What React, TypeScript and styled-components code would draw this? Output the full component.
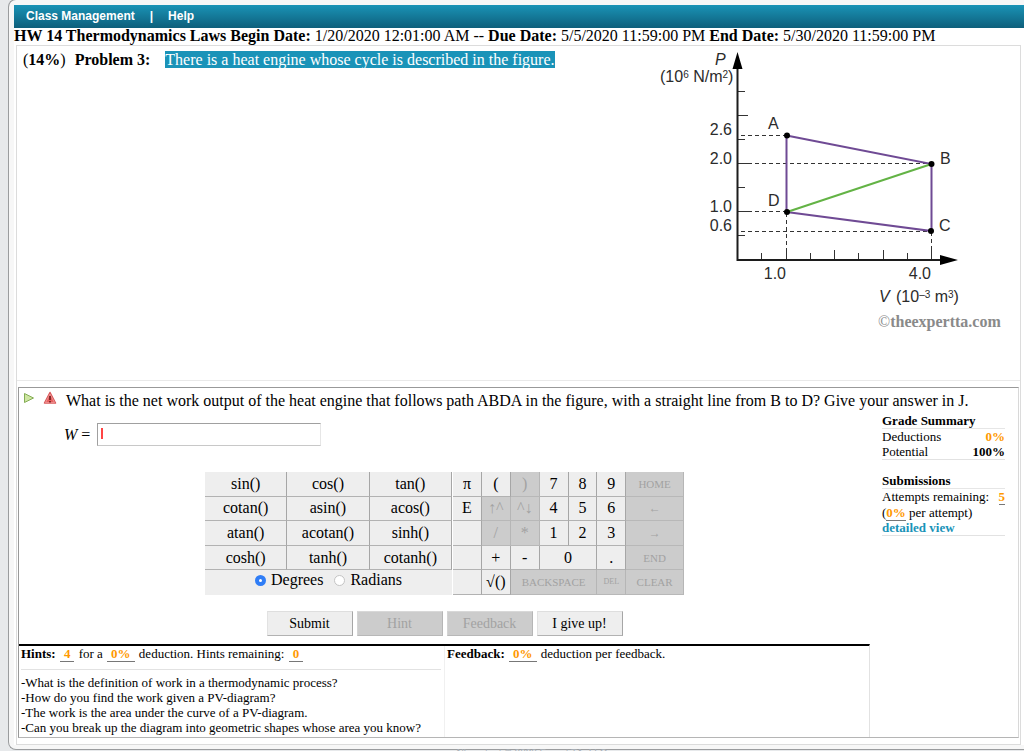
import React, { useState } from "react";
import styled, { createGlobalStyle, css } from "styled-components";

const Global = createGlobalStyle`
  *, *::before, *::after { box-sizing: border-box; }
  body {
    margin: 0;
    background: #e7e9eb;
    color: #000;
    font-family: "Liberation Serif", "Times New Roman", serif;
    font-size: 16px;
    overflow: hidden;
  }
`;

const Frame = styled.div`
  margin: -1px 0 0 8px;
  padding: 5px 0 4px 5px;
  border: 1px solid #9a9c9e;
  border-right: 0;
  border-radius: 8px 0 0 8px;
  background: #f7f7f7;
`;

const NavBar = styled.nav`
  display: flex;
  align-items: center;
  gap: 15px;
  height: 23px;
  padding: 0 12px 2px;
  background: linear-gradient(#1a93b6, #0e5f7b);
  color: #fff;
  font: bold 12px/16px "Liberation Sans", Arial, sans-serif;
`;

const NavLink = styled.a`
  color: inherit;
  text-decoration: none;
`;

const Page = styled.main`
  padding-right: 3px;
  background: #fff;
`;

const Title = styled.h1`
  margin: 0;
  height: 17px;
  font-size: 16px;
  line-height: 16px;
  font-weight: bold;
  white-space: nowrap;
  span { font-weight: normal; }
`;

const Sheet = styled.div`
  margin-left: 2px;
  border: 1px solid #dcdcdc;
`;

const Problem = styled.section`
  display: flex;
  justify-content: space-between;
  align-items: flex-start;
  height: 335px;
  padding: 5px 7px 0 6px;
  border-bottom: 1px solid #e9e9e9;
`;

const ProblemText = styled.p`
  margin: 0;
  display: flex;
  gap: 9px;
  line-height: 17px;
  white-space: nowrap;
`;

const Highlight = styled.span`
  margin-left: 6px;
  background: #1a93b8;
  color: #fff;
`;

const Figure = styled.svg`
  display: block;
  flex: none;
  font-family: "Liberation Sans", Arial, sans-serif;
  font-size: 16px;
  fill: #2b2b2b;
`;

const Question = styled.section`
  margin: 6px 1px 6px 1px;
  border: 1px solid #999;
  border-right-color: #d8d8d8;
  border-bottom-color: #b5b5b5;
`;

const Prompt = styled.div`
  display: flex;
  align-items: center;
  gap: 8px;
  height: 26px;
  padding-left: 4px;
  white-space: nowrap;
  svg { flex: none; margin-bottom: 6px; }
`;

const PromptText = styled.p`
  margin: 0;
  padding-left: 1px;
`;

const Body = styled.div`
  display: flex;
  align-items: stretch;
`;

const Work = styled.div`
  flex: 1;
  min-width: 0;
`;

const AnswerRow = styled.div`
  display: flex;
  align-items: center;
  gap: 7px;
  margin: 9px 0 0 45px;
`;

const AnswerInput = styled.input`
  width: 224px;
  height: 23px;
  padding: 0 3px;
  border: 1px solid #a0a0a0;
  border-right-color: #e6e6e6;
  border-bottom-color: #c8c8c8;
  font: inherit;
  caret-color: #f00;
  outline: none;
  &:placeholder-shown {
    caret-color: transparent;
    background: linear-gradient(#f44, #f44) 3px 4px / 2px 11px no-repeat #fff;
  }
`;

const Keypad = styled.div`
  display: flex;
  justify-content: center;
  gap: 1px;
  margin-top: 26px;
`;

const Functions = styled.div`
  display: grid;
  grid-template-columns: repeat(3, minmax(0, 1fr));
  grid-template-rows: repeat(5, minmax(0, 1fr));
  width: 247px;
  height: 123px;
`;

const Digits = styled(Functions)`
  grid-template-columns: repeat(6, minmax(0, 1fr)) minmax(0, 2fr);
  width: 231px;
`;

const face = css`
  border: 1px solid;
  border-color: #dedede #a6a6a6 #b2b2b2 #e2e2e2;
  background: #eee;
  color: #000;
  font-family: inherit;
  white-space: nowrap;
  &:disabled {
    border-color: #d8d8d8 #b6b6b6 #b8b8b8 #d4d4d4;
    background: #ccc;
    color: #a2a2a2;
  }
`;

const Key = styled.button<{ $span?: number; $size?: number }>`
  ${face}
  grid-column: span ${(p) => p.$span ?? 1};
  padding: 0;
  border-width: 0 1px 1px 0;
  font-size: ${(p) => p.$size ?? 16}px;
  line-height: 18px;
`;

const Units = styled.div`
  grid-column: span 3;
  display: flex;
  justify-content: center;
  align-items: flex-start;
  gap: 11px;
  padding-top: 1px;
  background: #eee;
`;

const Unit = styled.label`
  display: flex;
  align-items: center;
  gap: 5px;
  line-height: 18px;
`;

const Radio = styled.input`
  appearance: none;
  width: 11px;
  height: 11px;
  margin: 0;
  border: 1px solid #c4c4c4;
  border-radius: 50%;
  background: #fff;
  &:checked { border: 4px solid #2f7df6; }
`;

const Actions = styled.div`
  display: flex;
  justify-content: center;
  gap: 4px;
  margin: 16px 0 8px;
`;

const Action = styled.button`
  ${face}
  width: 86px;
  height: 25px;
  padding: 0;
  font-size: 14px;
`;

const Help = styled.div`
  display: flex;
  height: 93px;
  border-top: 2px solid #000;
  border-right: 1px solid #e2e2e2;
  font-size: 13px;
  line-height: 15px;
  white-space: nowrap;
`;

const Hints = styled.div`
  width: 426px;
  padding: 0 3px 0 2px;
  border-right: 1px solid #f0f0f0;
`;

const Feedback = styled.div`
  padding-left: 2px;
`;

const HelpHead = styled.p<{ $ruled?: boolean }>`
  margin: 0;
  height: 24px;
  border-bottom: ${(p) => (p.$ruled ? "1px solid #e2e2e2" : "0")};
`;

const Value = styled.b<{ $tight?: boolean }>`
  margin: 0 ${(p) => (p.$tight ? 0 : 1)}px;
  padding: 0 ${(p) => (p.$tight ? 0 : 4)}px;
  border-bottom: 1px solid #777;
  color: #f90;
`;

const HintList = styled.ul`
  margin: 5px 0 0;
  padding: 0;
  list-style: none;
`;

const Summary = styled.aside`
  width: 148px;
  padding: 0 13px 0 12px;
  font-size: 13px;
  line-height: 15px;
  white-space: nowrap;
`;

const SummaryBlock = styled.section`
  margin-bottom: 14px;
  border-bottom: 1px solid #e2e2e2;
`;

const SummaryTitle = styled.h2`
  margin: 0;
  border-bottom: 1px solid #e6e6e6;
  font-size: 13px;
  line-height: 14px;
`;

const SummaryRow = styled.div`
  display: flex;
  justify-content: space-between;
`;

const Orange = styled.b`
  color: #f90;
`;

const Detail = styled.a`
  color: #1a93b8;
  font-weight: bold;
  text-decoration: none;
`;

const Footer = styled.footer`
  padding-left: 38px;
  color: #a9b0b8;
  font: 10px/8px "Liberation Sans", Arial, sans-serif;
  text-align: center;
`;

type KeyDef = { t: string; name?: string; off?: boolean; span?: number; size?: number };

const functionKeys = [
  "sin()", "cos()", "tan()", "cotan()", "asin()", "acos()",
  "atan()", "acotan()", "sinh()", "cosh()", "tanh()", "cotanh()",
];

const digitKeys: KeyDef[] = [
  { t: "π" }, { t: "(" }, { t: ")", off: true }, { t: "7" }, { t: "8" }, { t: "9" }, { t: "HOME", off: true, size: 11 },
  { t: "E" }, { t: "↑^", off: true }, { t: "^↓", off: true }, { t: "4" }, { t: "5" }, { t: "6" }, { t: "←", off: true, size: 12 },
  { t: "", name: "blank" }, { t: "/", off: true }, { t: "*", off: true }, { t: "1" }, { t: "2" }, { t: "3" }, { t: "→", off: true, size: 12 },
  { t: "", name: "blank" }, { t: "+" }, { t: "-" }, { t: "0", span: 2 }, { t: "." }, { t: "END", off: true, size: 11 },
  { t: "", name: "blank" }, { t: "√()" }, { t: "BACKSPACE", off: true, span: 3, size: 11 }, { t: "DEL", off: true, size: 8 }, { t: "CLEAR", off: true, size: 11 },
];

const hints = [
  "-What is the definition of work in a thermodynamic process?",
  "-How do you find the work given a PV-diagram?",
  "-The work is the area under the curve of a PV-diagram.",
  "-Can you break up the diagram into geometric shapes whose area you know?",
];

function PvDiagram() {
  return (
    <Figure width="356" height="285" viewBox="657 51 356 285" role="img" aria-label="Pressure against volume diagram of the cycle">
      <g stroke="#333" strokeWidth="1" fill="none">
        <path d="M738 91.500h7M738 115.500h10M738 139.500h7M738 163.500h10M738 187.500h7M738 211.500h10M738 235.500h7" />
        <path d="M761.500 260v-7M786.500 260v-10M810.500 260v-7M834.500 260v-10M858.500 260v-7M883.500 260v-10M907.500 260v-7M931.500 260v-10" />
        <path strokeDasharray="4 3" d="M741 135.500H786M748 163.500H931M748 211.500H786M741 231.500H931M786.500 213V252M931.500 232V252" />
      </g>
      <path d="M737.500 66V260H944" stroke="#1c1c1c" strokeWidth="2" fill="none" />
      <path d="M737.500 52l5 17h-10zM958 260l-18 5v-10z" fill="#000" />
      <g fill="none" strokeWidth="2">
        <path d="M786.500 212V135.500L931.500 164V231L786.500 212" stroke="#6f4a94" />
        <path d="M787 212L931.500 164" stroke="#63b345" />
      </g>
      <g fill="#000">
        <circle cx="787" cy="135.500" r="3" />
        <circle cx="931.500" cy="164" r="3" />
        <circle cx="787" cy="212" r="3" />
        <circle cx="931" cy="231" r="3" />
      </g>
      <text x="715" y="65" fontStyle="italic">P</text>
      <text x="660" y="82">(10<tspan fontSize="10" dy="-4">6</tspan><tspan dy="4"> N/m</tspan><tspan fontSize="10" dy="-4">2</tspan><tspan dy="4">)</tspan></text>
      <g textAnchor="end">
        <text x="732" y="135">2.6</text>
        <text x="732" y="164">2.0</text>
        <text x="732" y="212">1.0</text>
        <text x="732" y="231">0.6</text>
        <text x="786" y="279">1.0</text>
        <text x="931" y="279">4.0</text>
      </g>
      <text x="768" y="129">A</text>
      <text x="940" y="164">B</text>
      <text x="768" y="206">D</text>
      <text x="939" y="231">C</text>
      <text x="879" y="302" fontStyle="italic">V</text>
      <text x="896" y="302">(10<tspan fontSize="10" dy="-4">–3</tspan><tspan dy="4"> m</tspan><tspan fontSize="10" dy="-4">3</tspan><tspan dy="4">)</tspan></text>
      <text x="878" y="327" fontFamily="Liberation Serif, serif" fontSize="16" fontWeight="bold" fill="#8a8a8a">
        <tspan fontWeight="normal">©</tspan>theexpertta.com
      </text>
    </Figure>
  );
}

export default function App() {
  const [unit, setUnit] = useState("Degrees");
  return (
    <>
      <Global />
      <Frame>
        <NavBar>
          <NavLink href="#class">Class Management</NavLink>
          <span>|</span>
          <NavLink href="#help">Help</NavLink>
        </NavBar>
        <Page>
          <Title>
            HW 14 Thermodynamics Laws Begin Date: <span>1/20/2020 12:01:00 AM -- </span>Due Date:{" "}
            <span>5/5/2020 11:59:00 PM </span>End Date: <span>5/30/2020 11:59:00 PM</span>
          </Title>
          <Sheet>
            <Problem>
              <ProblemText>
                <span>(<b>14%</b>)</span>
                <b>Problem 3:</b>
                <Highlight>There is a heat engine whose cycle is described in the figure.</Highlight>
              </ProblemText>
              <PvDiagram />
            </Problem>
            <Question>
              <Prompt>
                <svg width="12" height="12" viewBox="0 0 12 12" aria-hidden="true">
                  <path d="M1.500 1.500L10.500 6L1.500 10.500Z" fill="#cfe6a2" stroke="#84ad55" strokeLinejoin="round" />
                </svg>
                <svg width="14" height="14" viewBox="0 0 14 14" aria-hidden="true">
                  <path d="M7 1.500L12.500 12H1.500Z" fill="#e8605f" stroke="#d9585a" strokeWidth="1.500" strokeLinejoin="round" />
                  <path d="M7 3L11.500 11.600H2.500Z" fill="none" stroke="#f0a0a0" strokeWidth="0.800" />
                  <path d="M7 5v4M7 10v1.500" stroke="#6a1a1a" strokeWidth="1.600" />
                </svg>
                <PromptText>
                  What is the net work output of the heat engine that follows path ABDA in the figure, with a straight line from B to D? Give your answer in J.
                </PromptText>
              </Prompt>
              <Body>
                <Work>
                  <AnswerRow>
                    <label htmlFor="work"><i>W</i> =</label>
                    <AnswerInput id="work" placeholder=" " />
                  </AnswerRow>
                  <Keypad>
                    <Functions>
                      {functionKeys.map((k) => <Key key={k}>{k}</Key>)}
                      <Units>
                        {["Degrees", "Radians"].map((u) => (
                          <Unit key={u}>
                            <Radio type="radio" name="unit" checked={unit === u} onChange={() => setUnit(u)} />
                            {u}
                          </Unit>
                        ))}
                      </Units>
                    </Functions>
                    <Digits>
                      {digitKeys.map((k, i) => (
                        <Key key={i} aria-label={k.name} disabled={k.off} $span={k.span} $size={k.size}>{k.t}</Key>
                      ))}
                    </Digits>
                  </Keypad>
                  <Actions>
                    <Action>Submit</Action>
                    <Action disabled>Hint</Action>
                    <Action disabled>Feedback</Action>
                    <Action>I give up!</Action>
                  </Actions>
                  <Help>
                    <Hints>
                      <HelpHead $ruled>
                        <b>Hints:</b> <Value>4</Value> for a <Value>0%</Value> deduction. Hints remaining: <Value>0</Value>
                      </HelpHead>
                      <HintList>
                        {hints.map((h) => <li key={h}>{h}</li>)}
                      </HintList>
                    </Hints>
                    <Feedback>
                      <HelpHead>
                        <b>Feedback:</b> <Value>0%</Value> deduction per feedback.
                      </HelpHead>
                    </Feedback>
                  </Help>
                </Work>
                <Summary>
                  <SummaryBlock>
                    <SummaryTitle>Grade Summary</SummaryTitle>
                    <SummaryRow><span>Deductions</span><Orange>0%</Orange></SummaryRow>
                    <SummaryRow><span>Potential</span><b>100%</b></SummaryRow>
                  </SummaryBlock>
                  <SummaryBlock>
                    <SummaryTitle>Submissions</SummaryTitle>
                    <SummaryRow><span>Attempts remaining:</span><Value $tight>5</Value></SummaryRow>
                    <div>(<Value $tight>0%</Value> per attempt)</div>
                    <Detail href="#detail">detailed view</Detail>
                  </SummaryBlock>
                </Summary>
              </Body>
            </Question>
          </Sheet>
        </Page>
      </Frame>
      <Footer>All content © 2020 Expert TA, LLC</Footer>
    </>
  );
}
